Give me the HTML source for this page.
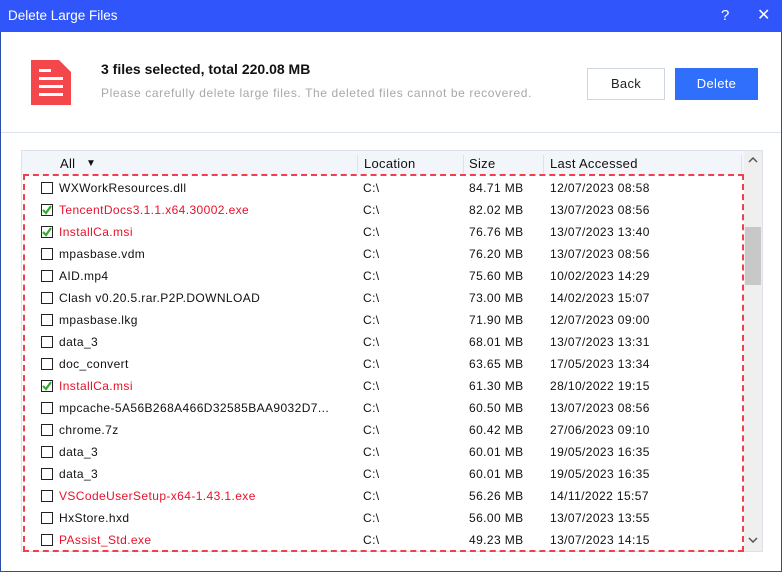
<!DOCTYPE html>
<html><head><meta charset="utf-8"><style>
*{margin:0;padding:0;box-sizing:border-box}
body{width:782px;height:572px;overflow:hidden;background:#fff;font-family:"Liberation Sans",sans-serif;position:relative}
.win{position:absolute;left:0;top:0;width:782px;height:572px;border:1px solid #2a4fa8;border-top:none}
.title{position:absolute;left:0;top:0;width:782px;height:32px;background:#2f55fb;color:#fff;font-size:13.5px;line-height:32px;padding-left:8px}
.title .q{position:absolute;left:721px;top:0;font-size:15px}
.title .x{position:absolute;left:757px;top:0;font-size:16px}
.sep{position:absolute;left:1px;top:132px;width:780px;height:1px;background:#dde3ec}
.h1{position:absolute;left:101px;top:61px;font-size:14px;font-weight:bold;color:#111}
.h2{position:absolute;left:101px;top:86px;font-size:12px;color:#a8a8a8;letter-spacing:.6px}
.btn{position:absolute;top:68px;width:78px;height:32px;font-size:13px;line-height:30px;text-align:center;letter-spacing:.3px}
.back{left:587px;border:1px solid #d0d6e0;color:#222;background:#fff}
.del{left:675px;width:83px;background:#2f6ffb;color:#fff;line-height:32px}
.list{position:absolute;left:21px;top:150px;width:742px;height:402px;border:1px solid #dde2ea}
.hdr{position:absolute;left:0;top:0;width:722px;height:24px;background:#f2f5fa;font-size:13px;color:#111;line-height:26px;letter-spacing:.3px}
.hdr span{position:absolute;top:0}
.hdr i{position:absolute;top:4px;width:1px;height:18px;background:#dde2ea}
.sb{position:absolute;left:722px;top:0;width:18px;height:400px;background:#efefef}
.thumb{position:absolute;left:1px;top:76px;width:16px;height:58px;background:#c8c8c8}
.dash{position:absolute;left:1px;top:23px;width:721px;height:378px;border:2.5px dashed #f0404f}
.row{position:absolute;left:0;height:22px;width:720px;font-size:12px;line-height:22px;color:#111;letter-spacing:.4px}
.row span{position:absolute;top:0}
.cb{position:absolute;left:19px;top:5px;width:12px;height:12px;border:1px solid #222;background:#fff}
.red .n{color:#e8102a}
.cb svg{position:absolute;left:0;top:0}
</style></head><body>
<div class="win"></div>
<div class="title">Delete Large Files<span class="q">?</span><span class="x">✕</span></div>
<svg style="position:absolute;left:31px;top:60px" width="40" height="45"><path d="M0 0H28L40 12V45H0Z" fill="#f4474c"/><rect x="8" y="9" width="12" height="3" fill="#fff"/><rect x="8" y="17" width="24" height="3" fill="#fff"/><rect x="8" y="25" width="24" height="3" fill="#fff"/><rect x="8" y="33" width="24" height="3" fill="#fff"/></svg>
<div class="h1">3 files selected, total 220.08 MB</div>
<div class="h2">Please carefully delete large files. The deleted files cannot be recovered.</div>
<div class="btn back">Back</div>
<div class="btn del">Delete</div>
<div class="sep"></div>
<div class="list">
<div class="hdr"><span style="left:38px">All</span><span style="left:64px;font-size:10px">▼</span><i style="left:335px"></i><span style="left:342px">Location</span><i style="left:441px"></i><span style="left:447px">Size</span><i style="left:521px"></i><span style="left:528px">Last Accessed</span><i style="left:719px"></i></div>
<div class="sb"><svg style="position:absolute;left:4px;top:6px" width="10" height="6"><path d="M1 5L5 1L9 5" stroke="#555" stroke-width="1.5" fill="none"/></svg><div class="thumb"></div><svg style="position:absolute;left:4px;top:386px" width="10" height="6"><path d="M1 1L5 5L9 1" stroke="#555" stroke-width="1.5" fill="none"/></svg></div>
<div class="dash"></div>
<div id="rows"></div>
</div>
<script>
var d=[["WXWorkResources.dll","84.71 MB","12/07/2023 08:58",0],["TencentDocs3.1.1.x64.30002.exe","82.02 MB","13/07/2023 08:56",2],["InstallCa.msi","76.76 MB","13/07/2023 13:40",2],["mpasbase.vdm","76.20 MB","13/07/2023 08:56",0],["AID.mp4","75.60 MB","10/02/2023 14:29",0],["Clash v0.20.5.rar.P2P.DOWNLOAD","73.00 MB","14/02/2023 15:07",0],["mpasbase.lkg","71.90 MB","12/07/2023 09:00",0],["data_3","68.01 MB","13/07/2023 13:31",0],["doc_convert","63.65 MB","17/05/2023 13:34",0],["InstallCa.msi","61.30 MB","28/10/2022 19:15",2],["mpcache-5A56B268A466D32585BAA9032D7...","60.50 MB","13/07/2023 08:56",0],["chrome.7z","60.42 MB","27/06/2023 09:10",0],["data_3","60.01 MB","19/05/2023 16:35",0],["data_3","60.01 MB","19/05/2023 16:35",0],["VSCodeUserSetup-x64-1.43.1.exe","56.26 MB","14/11/2022 15:57",1],["HxStore.hxd","56.00 MB","13/07/2023 13:55",0],["PAssist_Std.exe","49.23 MB","13/07/2023 14:15",1]];
var ck='<svg width="10" height="10"><path d="M1 5L4 8L9 1" stroke="#3aa830" stroke-width="2.2" fill="none"/></svg>';
var h="";d.forEach(function(r,i){h+='<div class="row'+(r[3]?' red':'')+'" style="top:'+(26+i*22)+'px"><div class="cb">'+(r[3]==2?ck:'')+'</div><span class="n" style="left:37px">'+r[0]+'</span><span style="left:341px">C:\\</span><span style="left:447px">'+r[1]+'</span><span style="left:528px">'+r[2]+'</span></div>'});
document.getElementById("rows").innerHTML=h;
</script>
</body></html>
